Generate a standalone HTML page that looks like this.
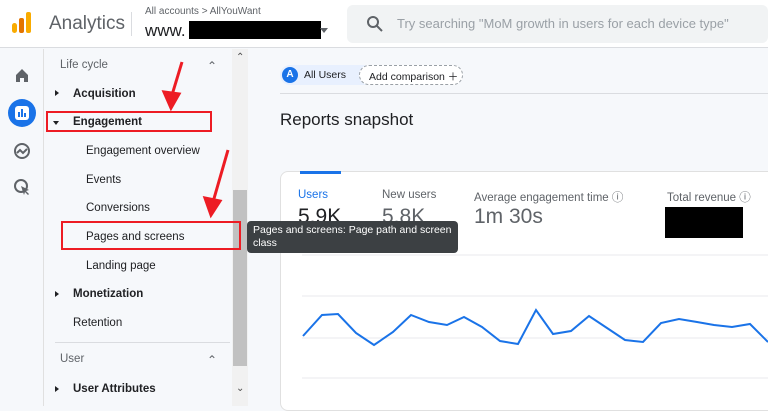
<!DOCTYPE html><html><head><style>
*{margin:0;padding:0;box-sizing:border-box}
body{width:768px;height:406px;overflow:hidden;font-family:"Liberation Sans",Arial,sans-serif;background:#f6f8fb;position:relative;color:#202124}
.a{position:absolute}
.nav{font-size:11.5px;color:#202124;font-weight:bold}
.sub{font-size:11.5px;color:#202124}
</style></head><body>
<div class="a" style="left:0;top:0;width:768px;height:48px;background:#fff;border-bottom:1px solid #dadce0"></div>
<div class="a" style="left:12px;top:23px;width:5px;height:10px;background:#f9ab00;border-radius:3px"></div>
<div class="a" style="left:19px;top:18px;width:5px;height:15px;background:#e37400;border-radius:2px"></div>
<div class="a" style="left:26px;top:12px;width:5px;height:21px;background:#f9ab00;border-radius:2px"></div>
<div class="a" style="left:49px;top:13px;font-size:19px;color:#5f6368">Analytics</div>
<div class="a" style="left:131px;top:12px;width:1px;height:24px;background:#dadce0"></div>
<div class="a" style="left:145px;top:6px;font-size:10px;color:#5f6368">All accounts &gt; AllYouWant</div>
<div class="a" style="left:145px;top:21px;font-size:17px;color:#202124">www.</div>
<div class="a" style="left:189px;top:21px;width:132px;height:18px;background:#000"></div>
<div class="a" style="left:320px;top:28px;border:4px solid transparent;border-top:5px solid #5f6368"></div>
<div class="a" style="left:347px;top:5px;width:421px;height:38px;background:#f1f3f4;border-radius:6px"></div>
<svg class="a" style="left:366px;top:15px" width="18" height="18" viewBox="0 0 18 18"><circle cx="7" cy="7" r="5" fill="none" stroke="#5f6368" stroke-width="2"/><path d="M11 11l5 5" stroke="#5f6368" stroke-width="2"/></svg>
<div class="a" style="left:397px;top:16px;font-size:13px;color:#9aa0a6">Try searching "MoM growth in users for each device type"</div>
<!-- rail -->
<div class="a" style="left:0;top:49px;width:44px;height:357px;background:#f6f8fb;border-right:1px solid #e0e0e0"></div>
<svg class="a" style="left:14px;top:67px" width="16" height="16" viewBox="0 0 16 16"><path d="M2 8L8 2l6 6v7H10v-4H6v4H2z" fill="#5f6368"/></svg>
<div class="a" style="left:8px;top:99px;width:28px;height:28px;border-radius:50%;background:#1a73e8"></div>
<div class="a" style="left:15px;top:106px;width:14px;height:14px;border-radius:3px;background:#fff"></div>
<div class="a" style="left:18px;top:112px;width:2px;height:5px;background:#1a73e8"></div><div class="a" style="left:21px;top:109px;width:2px;height:8px;background:#1a73e8"></div><div class="a" style="left:24px;top:113px;width:2px;height:4px;background:#1a73e8"></div>
<svg class="a" style="left:13px;top:142px" width="18" height="18" viewBox="0 0 18 18"><circle cx="9" cy="9" r="7" fill="none" stroke="#5f6368" stroke-width="2"/><path d="M4 11l3-3 3 3 4-4" fill="none" stroke="#5f6368" stroke-width="2"/></svg>
<svg class="a" style="left:13px;top:178px" width="18" height="18" viewBox="0 0 18 18"><circle cx="8" cy="8" r="6" fill="none" stroke="#5f6368" stroke-width="2"/><path d="M8 8l8 4-3 1 3 3-1 1-3-3-1 3z" fill="#5f6368"/></svg>
<!-- sidebar -->
<div class="a" style="left:45px;top:49px;width:187px;height:357px;background:#f6f8fb"></div>
<div class="a" style="left:232px;top:49px;width:16px;height:357px;background:#f1f1f1"></div>
<div class="a" style="left:233px;top:190px;width:14px;height:176px;background:#c1c1c1"></div>
<div class="a" style="left:236px;top:52px;font-size:10px;color:#505050">&#8963;</div>
<div class="a" style="left:236px;top:383px;font-size:10px;color:#505050">&#8964;</div>
<div class="a sub" style="left:60px;top:59px;color:#5f6368">Life cycle</div>
<div class="a" style="left:207px;top:59px;font-size:12px;color:#5f6368">&#8963;</div>
<div class="a" style="left:55px;top:90px;border:3px solid transparent;border-left:4px solid #202124"></div>
<div class="a nav" style="left:73px;top:88px">Acquisition</div>
<div class="a" style="left:46px;top:111px;width:166px;height:21px;border:2px solid #ed1c24"></div>
<div class="a" style="left:53px;top:121px;border:3px solid transparent;border-top:4px solid #202124"></div>
<div class="a nav" style="left:73px;top:116px">Engagement</div>
<div class="a sub" style="left:86px;top:145px">Engagement overview</div>
<div class="a sub" style="left:86px;top:174px">Events</div>
<div class="a sub" style="left:86px;top:202px">Conversions</div>
<div class="a" style="left:61px;top:221px;width:180px;height:29px;border:2px solid #ed1c24"></div>
<div class="a sub" style="left:86px;top:231px">Pages and screens</div>
<div class="a sub" style="left:86px;top:260px">Landing page</div>
<div class="a" style="left:55px;top:291px;border:3px solid transparent;border-left:4px solid #202124"></div>
<div class="a nav" style="left:73px;top:288px">Monetization</div>
<div class="a sub" style="left:73px;top:317px">Retention</div>
<div class="a" style="left:55px;top:342px;width:175px;height:1px;background:#dadce0"></div>
<div class="a sub" style="left:60px;top:353px;color:#5f6368">User</div>
<div class="a" style="left:207px;top:353px;font-size:12px;color:#5f6368">&#8963;</div>
<div class="a" style="left:55px;top:386px;border:3px solid transparent;border-left:4px solid #202124"></div>
<div class="a nav" style="left:73px;top:383px">User Attributes</div>
<!-- arrows -->
<svg class="a" style="left:0;top:0" width="768" height="406"><g stroke="#ed1c24" stroke-width="3" fill="#ed1c24"><path d="M182 62L172 95"/><path d="M164 92l7 16 8-14z"/><path d="M228 150L213 202"/><path d="M205 198l6 17 9-14z"/></g></svg>
<!-- main -->
<div class="a" style="left:280px;top:65px;width:93px;height:20px;background:#e8f0fe;border-radius:10px"></div>
<div class="a" style="left:282px;top:67px;width:16px;height:16px;border-radius:50%;background:#1a73e8;color:#fff;font-size:10px;text-align:center;line-height:16px;font-weight:bold">A</div>
<div class="a" style="left:304px;top:69px;font-size:10.5px;color:#202124">All Users</div>
<div class="a" style="left:359px;top:65px;width:104px;height:20px;border:1px dashed #9aa0a6;border-radius:10px;background:#fff"></div>
<div class="a" style="left:369px;top:69px;font-size:10.5px;color:#202124">Add comparison ＋</div>
<div class="a" style="left:280px;top:93px;width:488px;height:1px;background:#dadce0"></div>
<div class="a" style="left:280px;top:110px;font-size:17px;color:#202124">Reports snapshot</div>
<div class="a" style="left:280px;top:171px;width:500px;height:240px;background:#fff;border:1px solid #e0e0e0;border-radius:8px"></div>
<div class="a" style="left:300px;top:171px;width:41px;height:3px;background:#1a73e8"></div>
<div class="a" style="left:298px;top:189px;font-size:11.5px;color:#1a73e8">Users</div>
<div class="a" style="left:382px;top:189px;font-size:11.5px;color:#5f6368">New users</div>
<div class="a" style="left:474px;top:189px;font-size:11.5px;color:#5f6368">Average engagement time ⓘ</div>
<div class="a" style="left:667px;top:189px;font-size:11.5px;color:#5f6368">Total revenue ⓘ</div>
<div class="a" style="left:298px;top:205px;font-size:21px;color:#202124">5.9K</div>
<div class="a" style="left:382px;top:205px;font-size:21px;color:#5f6368">5.8K</div>
<div class="a" style="left:474px;top:205px;font-size:21px;color:#5f6368">1m 30s</div>
<div class="a" style="left:665px;top:207px;width:78px;height:31px;background:#000"></div>
<svg class="a" style="left:0;top:0" width="768" height="406"><g stroke="#e8eaed" stroke-width="1"><path d="M302 255H768M302 296H768M302 338H768M302 378H768"/></g>
<polyline fill="none" stroke="#1a73e8" stroke-width="2" points="303,336 322,315 338,314 356,333 374,345 393,332 411,315 429,322 447,325 464,317 482,327 500,341 518,344 536,310 553,334 571,331 589,316 607,328 625,340 643,342 661,323 679,319 697,322 714,325 732,327 750,324 768,342"/></svg>
<div class="a" style="left:247px;top:221px;width:211px;height:32px;background:#3c4043;border-radius:4px;color:#fff;font-size:10.5px;padding:3px 6px;line-height:13px">Pages and screens: Page path and screen class</div>
</body></html>
